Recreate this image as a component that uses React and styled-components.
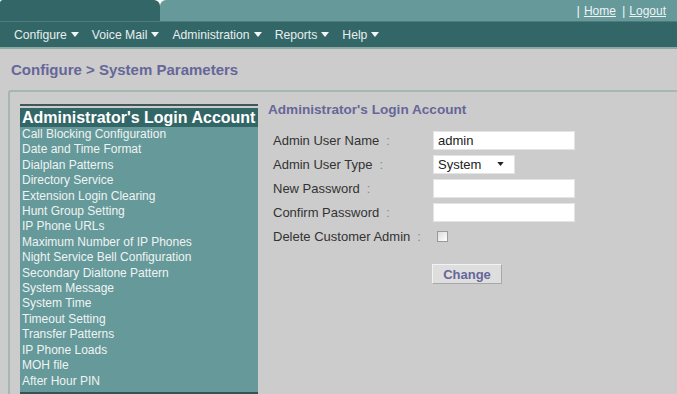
import React from "react";
import styled, { createGlobalStyle } from "styled-components";

const Global = createGlobalStyle`
  html, body { margin: 0; padding: 0; }
  body {
    background: #cccccc;
    font-family: Arial, "Liberation Sans", Helvetica, sans-serif;
    width: 677px;
    height: 394px;
    overflow: hidden;
  }
`;

const Page = styled.div`
  width: 677px;
  height: 394px;
  overflow: hidden;
  background: #cccccc;
  display: flex;
  flex-direction: column;
`;

const TopBar = styled.div`
  height: 21px;
  display: flex;
  background: #ffffff;
  flex-shrink: 0;
`;

const Tab = styled.div`
  width: 160px;
  background: #336666;
  border-top-left-radius: 3px;
  border-top-right-radius: 6px;
`;

const TopRight = styled.div`
  flex: 1;
  background: #669999;
  border-top-left-radius: 6px;
  display: flex;
  justify-content: flex-end;
  align-items: center;
  padding-right: 9px;
  gap: 4px;
  font-size: 12px;
`;

const Sep = styled.span`
  color: #e8f4f4;
  font-size: 13px;
`;

const TopLink = styled.a`
  color: #eef4f6;
  text-decoration: underline;
  cursor: pointer;
  margin-right: 2px;
`;

const NavBar = styled.div`
  height: 25px;
  background: #336666;
  border-top: 1px solid #4f7b7b;
  border-bottom: 2px solid #8ea8a5;
  display: flex;
  align-items: center;
  padding-left: 14px;
  gap: 13px;
  flex-shrink: 0;
`;

const NavItem = styled.div`
  display: flex;
  align-items: center;
  gap: 4px;
  color: #e6eeee;
  font-size: 12.2px;
`;

const Title = styled.div`
  color: #666699;
  font-weight: bold;
  font-size: 15px;
  padding: 12px 0 0 11px;
  height: 29px;
  flex-shrink: 0;
`;

const Panel = styled.div`
  margin-left: 8px;
  width: 661px;
  flex: 1;
  border: 2px solid #a5b6b3;
  border-bottom: none;
  border-radius: 3px 3px 0 0;
  display: flex;
  padding: 12px 0 0 10px;
  gap: 10px;
`;

const Sidebar = styled.div`
  width: 238px;
  border-top: 2px solid #3f5959;
  padding-top: 2px;
  align-self: flex-start;
`;

const SideList = styled.div`
  background: #669999;
  border-bottom: 2px solid #355353;
  padding-bottom: 3px;
`;

const SideHeader = styled.div`
  background: #336666;
  color: #ffffff;
  font-weight: bold;
  font-size: 16px;
  line-height: 19px;
  padding-left: 2px;
  white-space: nowrap;
`;

const SideItem = styled.div`
  color: #eef4f4;
  font-size: 12px;
  line-height: 15.4px;
  padding-left: 2px;
  white-space: nowrap;
`;

const FormArea = styled.div`
  display: flex;
  flex-direction: column;
`;

const FormHeading = styled.div`
  color: #666699;
  font-weight: bold;
  font-size: 13.6px;
  line-height: 16px;
  margin-top: -2px;
`;

const FormGrid = styled.div`
  display: grid;
  grid-template-columns: 160px auto;
  grid-auto-rows: 24px;
  align-items: center;
  padding-left: 5px;
  margin-top: 10px;
`;

const Label = styled.div`
  color: #333333;
  font-size: 13px;
  white-space: nowrap;
`;

const Colon = styled.span`
  color: #8a8a8a;
  margin-left: 7px;
`;

const TextInput = styled.div`
  width: 142px;
  height: 19px;
  background: #ffffff;
  border: 1px solid #e4e4e4;
  box-sizing: border-box;
  font-size: 13px;
  color: #222;
  display: flex;
  align-items: center;
  padding-left: 4px;
`;

const Select = styled.div`
  width: 82px;
  height: 19px;
  background: #ffffff;
  box-sizing: border-box;
  border: 1px solid #e4e4e4;
  font-size: 13px;
  color: #222;
  display: flex;
  align-items: center;
  justify-content: space-between;
  padding: 0 10px 0 4px;
`;

const Check = styled.div`
  width: 11px;
  height: 11px;
  margin-left: 4px;
  border: 1px solid #9a9a9a;
  background: linear-gradient(135deg, #dcdcdc, #ffffff);
  box-sizing: border-box;
`;

const ButtonRow = styled.div`
  padding-left: 164px;
  margin-top: 16px;
`;

const Button = styled.div`
  width: 70px;
  height: 20px;
  box-sizing: border-box;
  background: #dedede;
  border: 1px solid;
  border-color: #f2f2f2 #a8a8a8 #a8a8a8 #f2f2f2;
  color: #666699;
  font-weight: bold;
  font-size: 13px;
  display: flex;
  align-items: center;
  justify-content: center;
`;

const Caret = ({ color = "#f4f8f8", w = 8, h = 5 }) => (
  <svg width={w} height={h} viewBox="0 0 8 5">
    <path d="M0 0 L8 0 L4 5 Z" fill={color} />
  </svg>
);

const navItems = ["Configure", "Voice Mail", "Administration", "Reports", "Help"];

const sideItems = [
  "Call Blocking Configuration",
  "Date and Time Format",
  "Dialplan Patterns",
  "Directory Service",
  "Extension Login Clearing",
  "Hunt Group Setting",
  "IP Phone URLs",
  "Maximum Number of IP Phones",
  "Night Service Bell Configuration",
  "Secondary Dialtone Pattern",
  "System Message",
  "System Time",
  "Timeout Setting",
  "Transfer Patterns",
  "IP Phone Loads",
  "MOH file",
  "After Hour PIN",
];

export default function App() {
  return (
    <>
      <Global />
      <Page>
        <TopBar>
          <Tab />
          <TopRight>
            <Sep>|</Sep>
            <TopLink>Home</TopLink>
            <Sep>|</Sep>
            <TopLink>Logout</TopLink>
          </TopRight>
        </TopBar>
        <NavBar>
          {navItems.map((n) => (
            <NavItem key={n}>
              {n}
              <Caret />
            </NavItem>
          ))}
        </NavBar>
        <Title>Configure &gt; System Parameters</Title>
        <Panel>
          <Sidebar>
            <SideList>
              <SideHeader>Administrator's Login Account</SideHeader>
              {sideItems.map((s) => (
                <SideItem key={s}>{s}</SideItem>
              ))}
            </SideList>
          </Sidebar>
          <FormArea>
            <FormHeading>Administrator's Login Account</FormHeading>
            <FormGrid>
              <Label>
                Admin User Name<Colon>:</Colon>
              </Label>
              <TextInput>admin</TextInput>
              <Label>
                Admin User Type<Colon>:</Colon>
              </Label>
              <Select>
                System
                <Caret color="#222" w={7} h={4} />
              </Select>
              <Label>
                New Password<Colon>:</Colon>
              </Label>
              <TextInput />
              <Label>
                Confirm Password<Colon>:</Colon>
              </Label>
              <TextInput />
              <Label>
                Delete Customer Admin<Colon>:</Colon>
              </Label>
              <Check />
            </FormGrid>
            <ButtonRow>
              <Button>Change</Button>
            </ButtonRow>
          </FormArea>
        </Panel>
      </Page>
    </>
  );
}
